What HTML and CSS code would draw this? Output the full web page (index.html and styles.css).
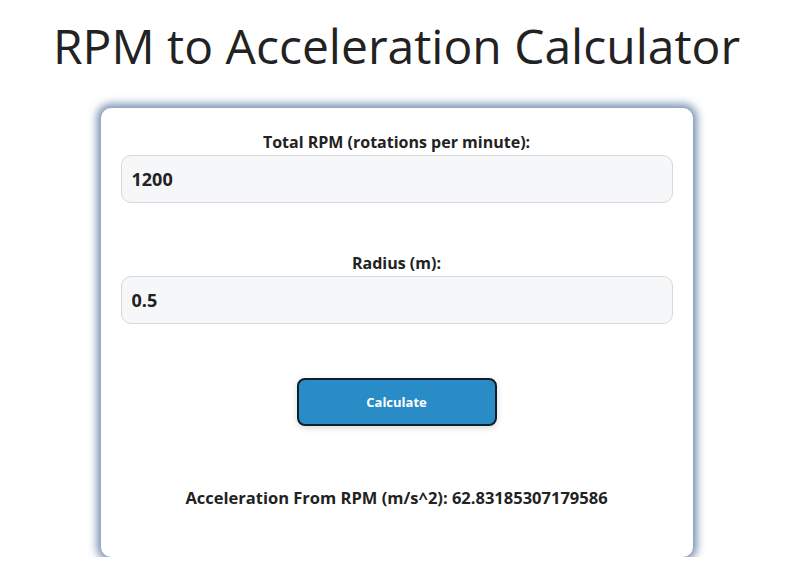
FILE: index.html
```html
<!DOCTYPE html>
<html lang="en">
<head>
  <meta charset="UTF-8">
  <meta name="viewport" content="width=device-width, initial-scale=1">
  <title>RPM to Acceleration Calculator</title>
  <link rel="stylesheet" href="styles.css">
</head>
<body>
  <h1>RPM to Acceleration Calculator</h1>

  <div class="calc-card">
    <label for="rpm">Total RPM (rotations per minute):</label>
    <input type="number" id="rpm" value="1200">

    <label for="radius" class="second">Radius (m):</label>
    <input type="number" id="radius" value="0.5">

    <button type="button" id="calcBtn">Calculate</button>

    <p class="result" id="result">Acceleration From RPM (m/s^2): 62.83185307179586</p>
  </div>

  <script>
    document.getElementById('calcBtn').addEventListener('click', function() {
      const rpm = Number(document.getElementById('rpm').value);
      const r = Number(document.getElementById('radius').value);
      const w = rpm * 2 * Math.PI / 60;
      document.getElementById('result').textContent = 'Acceleration From RPM (m/s^2): ' + (r * w * w / 60);
    });
  </script>
</body>
</html>
```

FILE: styles.css
```css
body {
  margin: 0;
  padding: 0;
  font-family: 'Open Sans', 'Noto Sans', sans-serif;
  color: #222;
  background: #fff;
}
h1 {
  margin: 16px 0 0;
  text-align: center;
  font-weight: 400;
  font-size: 48px;
  line-height: 60px;
  color: #222;
}
.calc-card {
  width: 552px;
  margin: 32px auto 0;
  padding: 24px 20px 49px;
  background: #fff;
  border-radius: 10px;
  box-shadow: 0 0 8px 4px rgba(75, 108, 150, 0.75);
  display: flex;
  flex-direction: column;
  align-items: center;
}
label {
  display: block;
  font-size: 16px;
  font-weight: 700;
  line-height: 20px;
  margin-bottom: 3px;
}
label.second {
  margin-top: 50px;
}
input[type="number"] {
  box-sizing: border-box;
  width: 100%;
  height: 48px;
  padding: 0 10px;
  border: 1px solid #d6d8db;
  border-radius: 10px;
  background: #f6f7f9;
  font-family: inherit;
  font-size: 18px;
  font-weight: 700;
  color: #222;
  -moz-appearance: textfield;
}
input::-webkit-outer-spin-button,
input::-webkit-inner-spin-button {
  -webkit-appearance: none;
  margin: 0;
}
button {
  margin-top: 54px;
  width: 200px;
  height: 48px;
  border: 2px solid #0d1f2d;
  border-radius: 8px;
  background: #2a8cc6;
  color: #fff;
  font-family: inherit;
  font-size: 13px;
  font-weight: 700;
  cursor: pointer;
  box-shadow: 0 2px 6px rgba(0, 0, 0, 0.15);
}
.result {
  margin: 62px 0 0;
  font-size: 16.5px;
  font-weight: 700;
  line-height: 20px;
}
```
